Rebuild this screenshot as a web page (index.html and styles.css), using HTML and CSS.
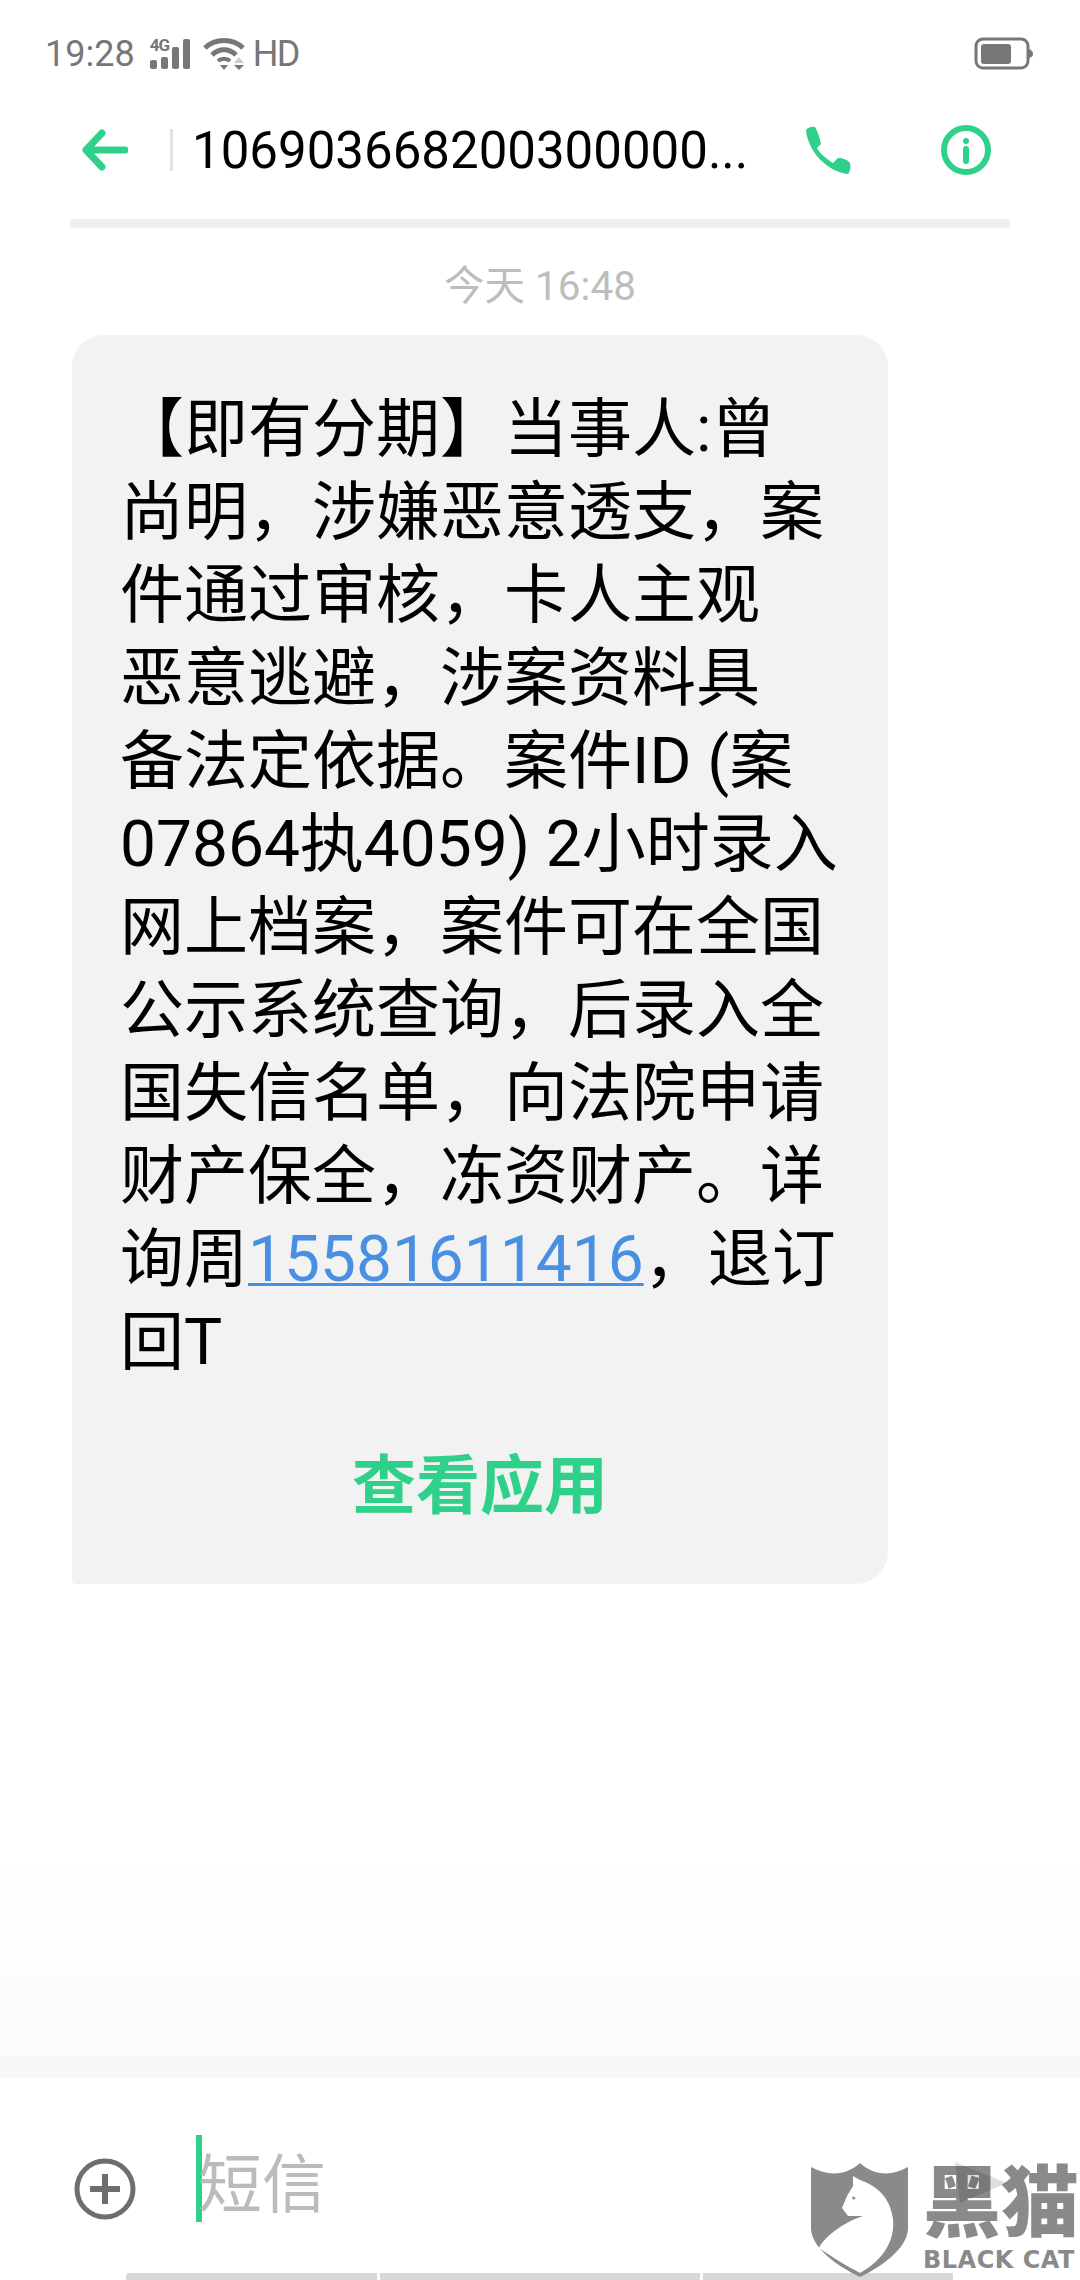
FILE: index.html
```html
<!DOCTYPE html>
<html lang="zh-CN">
<head>
    <title>短信</title>
    <meta name="viewport" content="width=device-width, initial-scale=1">
    <link rel="stylesheet" href="styles.css">
</head>
<body>
    <div class="status">
        <div class="status-left">
            <span class="clock">19:28</span>
            <div class="signal">
                <span class="signal-tag">4G</span>
                <svg class="signal-bars" width="41" height="30" viewBox="0 0 41 30">
                    <rect x="0" y="21" width="7" height="9" rx="2"/>
                    <rect x="11" y="18" width="7" height="12" rx="2"/>
                    <rect x="22" y="8" width="7" height="22" rx="2"/>
                    <rect x="33" y="0" width="7" height="30" rx="2"/>
                </svg>
            </div>
            <svg class="wifi" width="44" height="34" viewBox="0 0 44 34">
                <path d="M2 11C12 1 30 1 40 11" fill="none" stroke="#777" stroke-width="5"/>
                <path d="M9 18C16 11 26 11 33 18" fill="none" stroke="#777" stroke-width="5"/>
                <path d="M15 24C18 21 24 21 27 24" fill="none" stroke="#777" stroke-width="4"/>
                <path d="M17 28h8l-4 5z" fill="#777"/>
                <path d="M31 26h10l-5-6z" fill="#ccc"/>
                <path d="M31 28h10l-5 5z" fill="#777"/>
            </svg>
            <span class="hd">HD</span>
        </div>
        <svg class="battery" width="60" height="34" viewBox="0 0 60 34">
            <rect x="2" y="2" width="52" height="29" rx="7" fill="none" stroke="#777" stroke-width="3"/>
            <rect x="7" y="7" width="30" height="20" rx="3" fill="#777"/>
            <path d="M55 12c3 1 4 3 4 5s-1 3-4 4z" fill="#777"/>
        </svg>
    </div>

    <header class="toolbar">
        <svg class="back" width="46" height="42" viewBox="0 0 46 42">
            <path d="M20 4L4 21l16 17M5 21h38" fill="none" stroke="#2fd08a" stroke-width="7" stroke-linecap="round" stroke-linejoin="round"/>
        </svg>
        <span class="toolbar-sep"></span>
        <span class="sender">106903668200300000...</span>
        <svg class="phone" width="46" height="48" viewBox="0 0 46 48">
            <path d="M1 5C1 2 7 0 10 1C13 6 15 13 16 18L12 22C15 28 22 33 28 37L33 32C38 32 43 34 45 37C46 42 45 46 43 48C24 46 4 28 1 5Z" fill="#2fd08a"/>
        </svg>
        <svg class="info" width="52" height="52" viewBox="0 0 52 52">
            <circle cx="26" cy="26" r="22" fill="none" stroke="#2fd08a" stroke-width="6"/>
            <circle cx="26" cy="17" r="3" fill="#2fd08a"/>
            <path d="M26 25v12" stroke="#2fd08a" stroke-width="6" stroke-linecap="round"/>
        </svg>
    </header>
    <div class="divider"></div>

    <main class="thread">
        <div class="stamp">今天 16:48</div>
        <div class="bubble">
            <p class="bubble-text">【即有分期】当事人:曾<br>尚明，涉嫌恶意透支，案<br>件通过审核，卡人主观<br>恶意逃避，涉案资料具<br>备法定依据。案件ID (案<br>07864执4059) 2小时录入<br>网上档案，案件可在全国<br>公示系统查询，后录入全<br>国失信名单，向法院申请<br>财产保全，冻资财产。详<br>询周<a class="tel" href="#">15581611416</a>，退订<br>回T</p>
            <div class="bubble-action">查看应用</div>
        </div>
    </main>

    <footer class="composer">
        <div class="composer-row">
            <svg class="plus" width="62" height="62" viewBox="0 0 62 62">
                <circle cx="31" cy="31" r="28" fill="none" stroke="#6e6e6e" stroke-width="5"/>
                <path d="M31 16v30M16 31h30" stroke="#6e6e6e" stroke-width="6"/>
            </svg>
            <div class="field">
                <span class="caret"></span>
                <span class="placeholder">短信</span>
            </div>
        </div>
        <div class="keys">
            <span class="key key-first"></span>
            <span class="key key-mid"></span>
            <span class="key"></span>
        </div>
    </footer>

    <div class="mark">
        <svg class="mark-shield" width="98" height="115" viewBox="0 0 98 115">
            <path d="M0 4C18 14 36 12 49 0C62 12 80 14 97 4V66C96 86 70 104 49 114C28 104 1 86 0 66Z" fill="#8a8a8a"/>
            <path d="M42 13L49 17C66 23 79 34 82 56C84 76 74 96 49 110C36 103 24 96 8 85C12 76 30 60 52 53L37 53L31 45L36 33L42 23Z" fill="#fff"/>
            <path d="M41 33l4 2-3 2z" fill="#8a8a8a"/>
        </svg>
        <div class="mark-name">
            <span class="mark-cn">黑猫</span>
            <span class="mark-en">BLACK CAT</span>
        </div>
        <svg class="mark-tri" width="52" height="41" viewBox="0 0 52 41">
            <path d="M0 0L52 21L5 41Z" fill="#000" fill-opacity="0.13"/>
        </svg>
    </div>
</body>
</html>
```

FILE: styles.css
```css
html, body {
    margin: 0;
    padding: 0;
    width: 1080px;
    height: 2280px;
    overflow: hidden;
    background: #fff;
}
body {
    position: relative;
    display: flex;
    flex-direction: column;
    font-family: Roboto, "Noto Sans CJK SC", sans-serif;
    color: #000;
}

/* status bar */
.status {
    display: flex;
    justify-content: space-between;
    align-items: center;
    height: 108px;
    padding: 0 46px 0 45px;
    color: #777;
    flex: none;
}
.status-left {
    display: flex;
    align-items: center;
}
.clock {
    font-size: 36px;
}
.signal {
    position: relative;
    width: 41px;
    height: 30px;
    margin-left: 15px;
}
.signal-bars {
    display: block;
    fill: #777;
}
.signal-tag {
    position: absolute;
    left: 0;
    top: -2px;
    font-size: 17px;
    font-weight: 700;
    line-height: 17px;
    letter-spacing: -1px;
}
.wifi {
    margin-left: 12px;
}
.hd {
    margin-left: 6px;
    font-size: 36px;
    letter-spacing: -1.5px;
}

/* toolbar */
.toolbar {
    display: flex;
    align-items: center;
    height: 84px;
    padding: 0 0 0 82px;
    flex: none;
}
.toolbar-sep {
    width: 3px;
    height: 42px;
    margin-left: 42px;
    background: #e2e2e2;
}
.sender {
    width: 564px;
    margin-left: 19px;
    font-size: 51px;
    white-space: nowrap;
}
.phone {
    margin-left: 49px;
}
.info {
    margin-left: 89px;
}
.divider {
    height: 9px;
    margin: 27px 70px 0 70px;
    background: #f0f0f0;
    flex: none;
}

/* message thread */
.thread {
    flex: 1;
    padding-top: 34px;
    background: linear-gradient(to bottom, #fff 88%, #fbfbfb 98.8%, #f8f8f8 98.8%);
}
.stamp {
    height: 48px;
    font-size: 40.5px;
    line-height: 48px;
    text-align: center;
    color: #bdbdbd;
}
.bubble {
    width: 816px;
    height: 1249px;
    margin: 25px 0 0 72px;
    padding-top: 53px;
    box-sizing: border-box;
    background: #f2f2f2;
    border-radius: 32px 32px 32px 4px;
}
.bubble-text {
    margin: 0 0 0 48px;
    font-size: 64px;
    line-height: 83px;
    white-space: nowrap;
}
.tel {
    color: #4a90e2;
    text-decoration: underline;
    text-decoration-thickness: 3px;
}
.bubble-action {
    margin-top: 61px;
    font-size: 64px;
    line-height: 83px;
    font-weight: 700;
    text-align: center;
    color: #2fd08a;
}

/* composer */
.composer {
    height: 202px;
    flex: none;
    display: flex;
    flex-direction: column;
    background: #fff;
}
.composer-row {
    flex: 1;
    display: flex;
    align-items: center;
    padding: 0 0 0 74px;
}
.plus {
    margin-top: 26px;
}
.field {
    display: flex;
    align-items: center;
    margin-left: 60px;
    margin-top: 6px;
}
.caret {
    width: 6px;
    height: 87px;
    background: #2fd08a;
}
.placeholder {
    margin-left: -4px;
    font-size: 64px;
    color: #bbb;
}
.keys {
    display: flex;
    gap: 3px;
    height: 7px;
    padding-left: 126px;
    flex: none;
}
.key {
    width: 250px;
    background: #d8d8d8;
}
.key-first {
    width: 251px;
    border-radius: 4px 0 0 0;
}
.key-mid {
    width: 320px;
}

/* watermark, sits over the page */
.mark {
    position: absolute;
    right: 2px;
    bottom: 2px;
    width: 267px;
    height: 115px;
}
.mark-shield {
    position: absolute;
    left: 0;
    top: 0;
}
.mark-tri {
    position: absolute;
    left: 144px;
    top: -1px;
}
.mark-name {
    position: absolute;
    left: 112px;
    top: 0;
    width: 155px;
    color: #8a8a8a;
}
.mark-cn {
    display: block;
    font-size: 78px;
    line-height: 84px;
    font-weight: 900;
    white-space: nowrap;
}
.mark-en {
    display: block;
    font-family: "DejaVu Sans", sans-serif;
    font-size: 24px;
    line-height: 26px;
    font-weight: 700;
    letter-spacing: 0.5px;
    white-space: nowrap;
}
```
